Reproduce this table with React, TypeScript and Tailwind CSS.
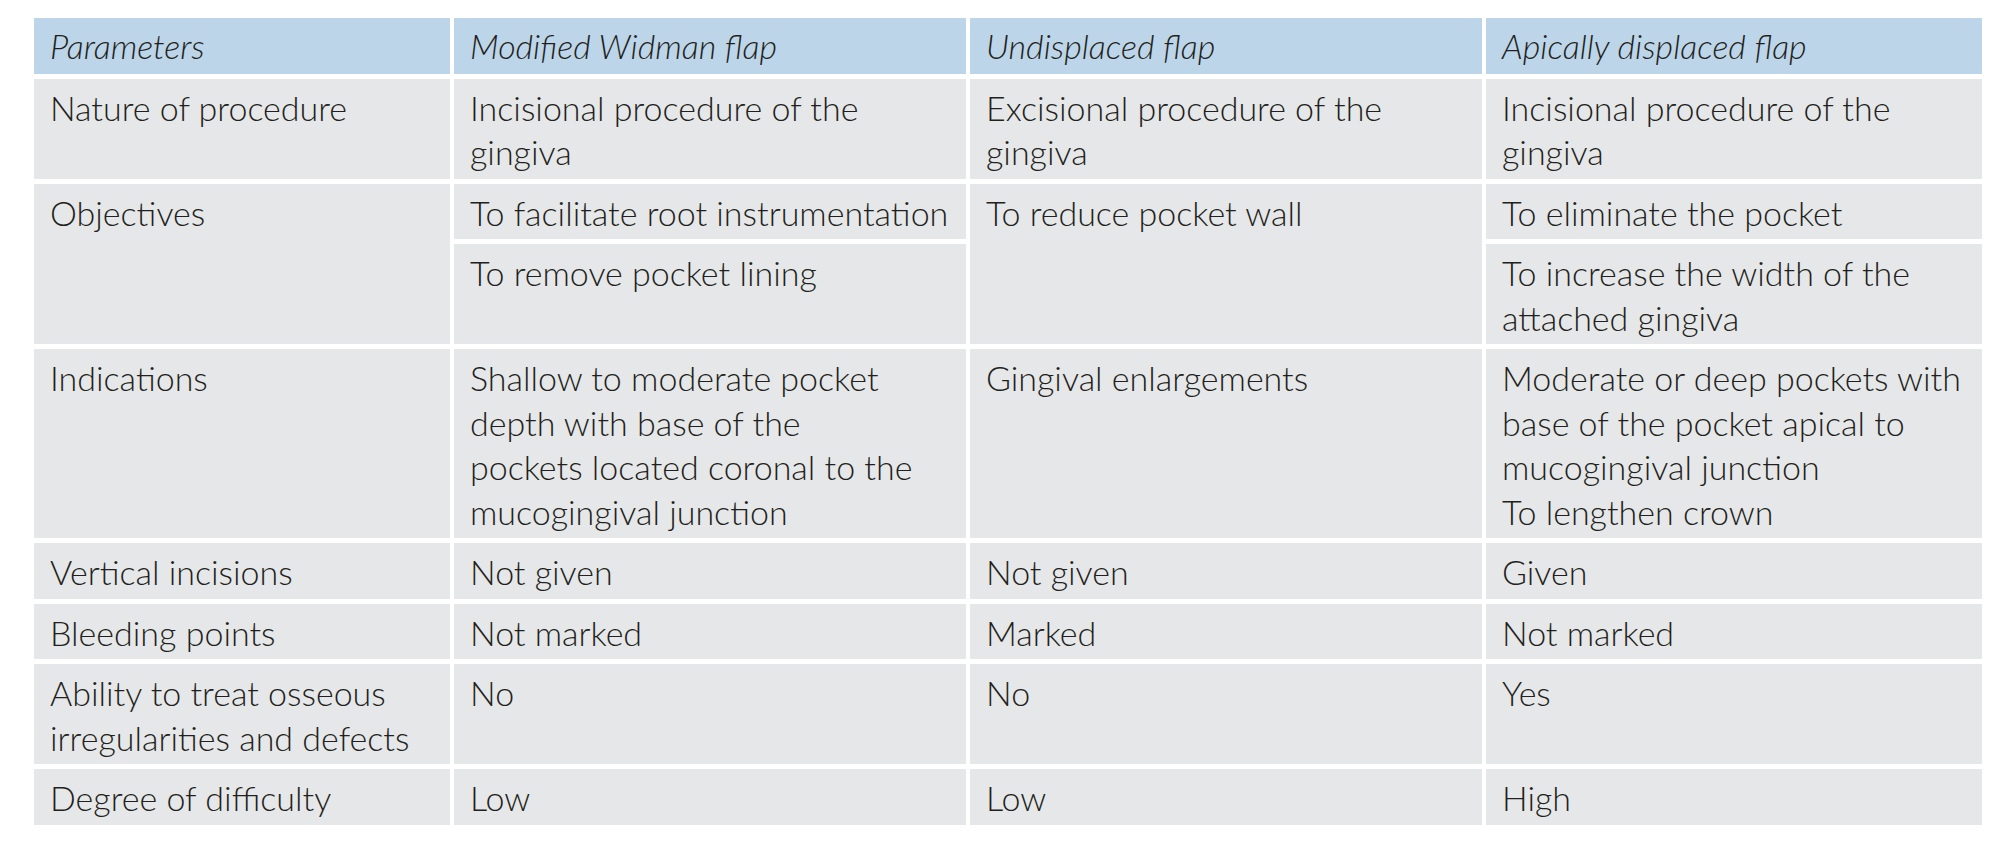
type Cell = { lines: string[]; span?: boolean };

const header = ["Parameters", "Modified Widman flap", "Undisplaced flap", "Apically displaced flap"];

// body cells in grid auto-placement order; span = covers both objective sub-rows
const body: Cell[] = [
  { lines: ["Nature of procedure"] },
  { lines: ["Incisional procedure of the", "gingiva"] },
  { lines: ["Excisional procedure of the", "gingiva"] },
  { lines: ["Incisional procedure of the", "gingiva"] },

  { lines: ["Objectives"], span: true },
  { lines: ["To facilitate root instrumentation"] },
  { lines: ["To reduce pocket wall"], span: true },
  { lines: ["To eliminate the pocket"] },
  { lines: ["To remove pocket lining"] },
  { lines: ["To increase the width of the", "attached gingiva"] },

  { lines: ["Indications"] },
  {
    lines: [
      "Shallow to moderate pocket",
      "depth with base of the",
      "pockets located coronal to the",
      "mucogingival junction",
    ],
  },
  { lines: ["Gingival enlargements"] },
  {
    lines: [
      "Moderate or deep pockets with",
      "base of the pocket apical to",
      "mucogingival junction",
      "To lengthen crown",
    ],
  },

  { lines: ["Vertical incisions"] },
  { lines: ["Not given"] },
  { lines: ["Not given"] },
  { lines: ["Given"] },

  { lines: ["Bleeding points"] },
  { lines: ["Not marked"] },
  { lines: ["Marked"] },
  { lines: ["Not marked"] },

  { lines: ["Ability to treat osseous", "irregularities and defects"] },
  { lines: ["No"] },
  { lines: ["No"] },
  { lines: ["Yes"] },

  { lines: ["Degree of difficulty"] },
  { lines: ["Low"] },
  { lines: ["Low"] },
  { lines: ["High"] },
];

export default function App() {
  return (
    <div className="min-h-screen bg-white pt-[18px] pl-[34px]">
      <div
        className="grid grid-cols-[416px_512px_512px_496px] gap-x-[4px] gap-y-[5px] text-[34px] font-light leading-[44.5px] text-[#231f20]"
        style={{ fontFamily: '"Lato", "Open Sans", sans-serif' }}
      >
        {header.map((h) => (
          <div key={h} className="bg-[#bcd5e8] pl-4 pt-[6px] pb-[5px] italic whitespace-nowrap">
            {h}
          </div>
        ))}
        {body.map((c, i) => (
          <div
            key={i}
            className={`bg-[#e6e7e8] pl-4 pt-[7px] pb-[4px] whitespace-nowrap ${c.span ? "row-span-2" : ""}`}
          >
            {c.lines.map((l, j) => (
              <div key={j}>{l}</div>
            ))}
          </div>
        ))}
      </div>
    </div>
  );
}
